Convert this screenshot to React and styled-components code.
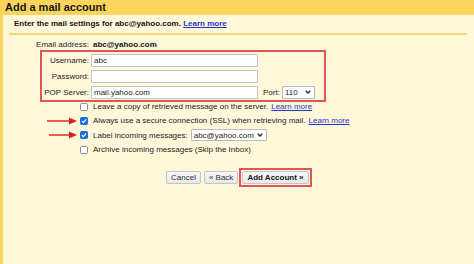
import React from "react";
import styled, { createGlobalStyle } from "styled-components";

const Global = createGlobalStyle`
  html, body { margin: 0; padding: 0; background: #fff7da; }
  body {
    font-family: "Liberation Sans", Arial, sans-serif;
    font-size: 8px;
    color: #1e1e1e;
  }
  * { box-sizing: border-box; }
`;

const Page = styled.div`
  width: 474px;
  height: 264px;
  overflow: hidden;
  display: flex;
  flex-direction: column;
  background: #fff7da;
`;

const Header = styled.div`
  flex: none;
  height: 15px;
  background: #fcd45c;
  font-weight: bold;
  font-size: 11px;
  line-height: 15px;
  padding-left: 5px;
  color: #151515;
`;

const Body = styled.div`
  flex: 1;
  border-left: 3px solid #fcd45c;
  padding: 3px 7px 0 6px;
  display: flex;
  flex-direction: column;
`;

const Intro = styled.div`
  font-weight: bold;
  line-height: 12px;
  padding-left: 5px;
  color: #151515;
`;

const Link = styled.a`
  color: #2536c8;
  text-decoration: underline;
  cursor: pointer;
`;

const Divider = styled.div`
  height: 2px;
  margin-top: 3px;
  background: #fad66e;
`;

const Form = styled.div`
  margin-top: 5px;
  padding-left: 31px;
  display: flex;
  flex-direction: column;
`;

const EmailRow = styled.div`
  display: grid;
  grid-template-columns: 49px auto;
  column-gap: 4px;
  line-height: 10px;
  height: 10px;
`;

const RightLabel = styled.span`
  justify-self: end;
  white-space: nowrap;
`;

const Strong = styled.span`
  font-weight: bold;
  color: #151515;
`;

const FieldBox = styled.div`
  width: 286px;
  border: 2px solid #e05656;
  display: flex;
  flex-direction: column;
`;

const FieldRow = styled.div`
  height: 16px;
  display: flex;
  align-items: center;
`;

const FieldLabel = styled.label`
  flex: none;
  width: 47px;
  margin-right: 2px;
  text-align: right;
  white-space: nowrap;
`;

const TextField = styled.div`
  width: 167px;
  height: 13px;
  border: 1px solid #c3c3c3;
  border-radius: 1px;
  background: #fff;
  padding: 0 2px;
  line-height: 11px;
  color: #1e1e1e;
  white-space: nowrap;
`;

const PortLabel = styled.label`
  margin-left: 5px;
  margin-right: 2px;
`;

const SelectBox = styled.div`
  width: ${(p) => p.$w}px;
  height: ${(p) => p.$h}px;
  border: 1px solid #b9b9b9;
  border-radius: 1px;
  background: #fff;
  display: flex;
  align-items: center;
  justify-content: space-between;
  padding: 0 3px 0 2px;
  color: #1e1e1e;
`;

const CheckList = styled.div`
  margin-top: -2.5px;
  display: flex;
  flex-direction: column;
`;

const CheckRow = styled.div`
  height: 14.3px;
  display: grid;
  grid-template-columns: 48px auto;
  column-gap: 5px;
  align-items: center;
`;

const Lead = styled.div`
  display: flex;
  justify-content: flex-end;
  align-items: center;
  gap: 3px;
`;

const Box = styled.span`
  width: 8px;
  height: 8px;
  border-radius: 1.5px;
  border: 1px solid ${(p) => (p.$checked ? "#1a6ed8" : "#8d8d8d")};
  background: ${(p) => (p.$checked ? "#1a6ed8" : "#fff")};
  display: flex;
  align-items: center;
  justify-content: center;
`;

const CheckText = styled.div`
  display: flex;
  align-items: center;
  gap: 3px;
  white-space: nowrap;
`;

const ButtonRow = styled.div`
  margin-top: 11px;
  padding-left: 157px;
  display: flex;
  align-items: center;
`;

const Button = styled.button`
  height: 13px;
  padding: 0 4px;
  margin-right: ${(p) => p.$mr || 0}px;
  border: 1px solid #c4c4c4;
  border-radius: 2px;
  background: linear-gradient(#f7f7f7, #e9e9e9);
  font: ${(p) => (p.$bold ? "bold" : "normal")} 8px "Liberation Sans", Arial, sans-serif;
  color: ${(p) => (p.$bold ? "#151515" : "#333")};
  line-height: 11px;
  white-space: nowrap;
`;

const PrimaryFrame = styled.div`
  border: 2px solid #e05656;
  padding: 1px;
  display: flex;
`;

const Chevron = () => (
  <svg width="6" height="4" viewBox="0 0 6 4">
    <path d="M0.6 0.6 L3 3 L5.4 0.6" fill="none" stroke="#222" strokeWidth="1.3" />
  </svg>
);

const Arrow = ({ w }) => (
  <svg width={w} height="8" viewBox={`0 0 ${w} 8`}>
    <line x1="0" y1="4" x2={w - 7} y2="4" stroke="#e01b1b" strokeWidth="1.4" />
    <path d={`M${w - 8} 0.6 L${w} 4 L${w - 8} 7.4 Z`} fill="#e01b1b" />
  </svg>
);

const Checkbox = ({ checked }) => (
  <Box $checked={checked}>
    {checked && (
      <svg width="6" height="6" viewBox="0 0 6 6">
        <path d="M0.8 3.1 L2.4 4.6 L5.2 1.3" fill="none" stroke="#fff" strokeWidth="1.2" />
      </svg>
    )}
  </Box>
);

const options = [
  { checked: false, text: "Leave a copy of retrieved message on the server.", link: true },
  { checked: true, arrow: 30, text: "Always use a secure connection (SSL) when retrieving mail.", link: true },
  { checked: true, arrow: 28, text: "Label incoming messages:", select: "abc@yahoo.com" },
  { checked: false, text: "Archive incoming messages (Skip the Inbox)" },
];

export default function App() {
  return (
    <>
      <Global />
      <Page>
        <Header>Add a mail account</Header>
        <Body>
          <Intro>
            Enter the mail settings for abc@yahoo.com. <Link>Learn more</Link>
          </Intro>
          <Divider />
          <Form>
            <EmailRow>
              <RightLabel>Email address:</RightLabel>
              <Strong>abc@yahoo.com</Strong>
            </EmailRow>
            <FieldBox>
              <FieldRow>
                <FieldLabel>Username:</FieldLabel>
                <TextField>abc</TextField>
              </FieldRow>
              <FieldRow>
                <FieldLabel>Password:</FieldLabel>
                <TextField />
              </FieldRow>
              <FieldRow>
                <FieldLabel>POP Server:</FieldLabel>
                <TextField>mail.yahoo.com</TextField>
                <PortLabel>Port:</PortLabel>
                <SelectBox $w={33} $h={13}>
                  <span>110</span>
                  <Chevron />
                </SelectBox>
              </FieldRow>
            </FieldBox>
            <CheckList>
              {options.map((o, i) => (
                <CheckRow key={i}>
                  <Lead>
                    {o.arrow && <Arrow w={o.arrow} />}
                    <Checkbox checked={o.checked} />
                  </Lead>
                  <CheckText>
                    <span>{o.text}</span>
                    {o.link && <Link>Learn more</Link>}
                    {o.select && (
                      <SelectBox $w={76} $h={12}>
                        <span>{o.select}</span>
                        <Chevron />
                      </SelectBox>
                    )}
                  </CheckText>
                </CheckRow>
              ))}
            </CheckList>
          </Form>
          <ButtonRow>
            <Button $mr={3}>Cancel</Button>
            <Button $mr={1}>« Back</Button>
            <PrimaryFrame>
              <Button $bold>Add Account »</Button>
            </PrimaryFrame>
          </ButtonRow>
        </Body>
      </Page>
    </>
  );
}
